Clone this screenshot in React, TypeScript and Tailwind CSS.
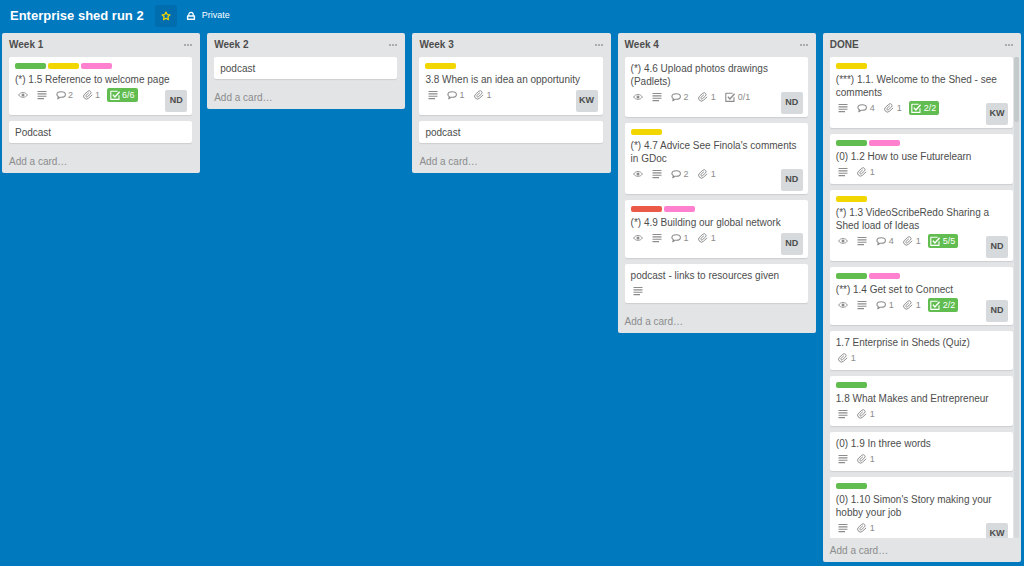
import type { ReactNode } from 'react';
import clsx from 'clsx';

type Label = 'green' | 'yellow' | 'pink' | 'red';

interface CardData {
  title: string;
  labels?: Label[];
  watching?: boolean;
  description?: boolean;
  comments?: number;
  attachments?: number;
  checklist?: string;
  member?: string;
}

interface ListData {
  name: string;
  cards: CardData[];
  scrollable?: boolean;
}

const labelColors: Record<Label, string> = {
  green: 'bg-[#61bd4f]',
  yellow: 'bg-[#f2d600]',
  pink: 'bg-[#ff80ce]',
  red: 'bg-[#eb5a46]',
};

const lists: ListData[] = [
  {
    name: 'Week 1',
    cards: [
      {
        title: '(*) 1.5 Reference to welcome page',
        labels: ['green', 'yellow', 'pink'],
        watching: true,
        description: true,
        comments: 2,
        attachments: 1,
        checklist: '6/6',
        member: 'ND',
      },
      { title: 'Podcast' },
    ],
  },
  { name: 'Week 2', cards: [{ title: 'podcast' }] },
  {
    name: 'Week 3',
    cards: [
      {
        title: '3.8 When is an idea an opportunity',
        labels: ['yellow'],
        description: true,
        comments: 1,
        attachments: 1,
        member: 'KW',
      },
      { title: 'podcast' },
    ],
  },
  {
    name: 'Week 4',
    cards: [
      {
        title: '(*) 4.6 Upload photos drawings (Padlets)',
        watching: true,
        description: true,
        comments: 2,
        attachments: 1,
        checklist: '0/1',
        member: 'ND',
      },
      {
        title: "(*) 4.7 Advice See Finola's comments in GDoc",
        labels: ['yellow'],
        watching: true,
        description: true,
        comments: 2,
        attachments: 1,
        member: 'ND',
      },
      {
        title: '(*) 4.9 Building our global network',
        labels: ['red', 'pink'],
        watching: true,
        description: true,
        comments: 1,
        attachments: 1,
        member: 'ND',
      },
      { title: 'podcast - links to resources given', description: true },
    ],
  },
  {
    name: 'DONE',
    scrollable: true,
    cards: [
      {
        title: '(***) 1.1. Welcome to the Shed - see comments',
        labels: ['yellow'],
        description: true,
        comments: 4,
        attachments: 1,
        checklist: '2/2',
        member: 'KW',
      },
      {
        title: '(0) 1.2 How to use Futurelearn',
        labels: ['green', 'pink'],
        description: true,
        attachments: 1,
      },
      {
        title: '(*) 1.3 VideoScribeRedo Sharing a Shed load of Ideas',
        labels: ['yellow'],
        watching: true,
        description: true,
        comments: 4,
        attachments: 1,
        checklist: '5/5',
        member: 'ND',
      },
      {
        title: '(**) 1.4 Get set to Connect',
        labels: ['green', 'pink'],
        watching: true,
        description: true,
        comments: 1,
        attachments: 1,
        checklist: '2/2',
        member: 'ND',
      },
      { title: '1.7 Enterprise in Sheds (Quiz)', attachments: 1 },
      {
        title: '1.8 What Makes and Entrepreneur',
        labels: ['green'],
        description: true,
        attachments: 1,
      },
      { title: '(0) 1.9 In three words', description: true, attachments: 1 },
      {
        title: "(0) 1.10 Simon's Story making your hobby your job",
        labels: ['green'],
        description: true,
        attachments: 1,
        member: 'KW',
      },
    ],
  },
];

function Icon({ children }: { children: ReactNode }) {
  return (
    <span className="flex w-[15px] shrink-0 justify-center">
      <svg viewBox="0 0 12 12" className="size-3" fill="none" stroke="currentColor" aria-hidden="true">
        {children}
      </svg>
    </span>
  );
}

function EyeIcon() {
  return (
    <Icon>
      <path d="M1.6 6C3.6 2.7 8.4 2.7 10.4 6C8.4 9.1 3.6 9.1 1.6 6Z" strokeWidth="0.9" />
      <circle cx="6" cy="6" r="1.5" fill="currentColor" stroke="none" />
    </Icon>
  );
}

function DescriptionIcon() {
  return (
    <Icon>
      <path d="M1.5 2.5H10.5M1.5 4.9H10.5M1.5 7.2H10.5M1.5 9.6H8" strokeWidth="1.1" />
    </Icon>
  );
}

function CommentIcon() {
  return (
    <Icon>
      <path
        d="M6.3 2.7C8.8 2.7 10.4 3.9 10.4 5.5S8.8 8.3 6.3 8.3C5.8 8.3 5.4 8.3 5 8.2L2.8 9.8L3.3 7.6C2.3 7.1 1.9 6.4 1.9 5.5C1.9 3.9 3.8 2.7 6.3 2.7Z"
        strokeWidth="1.1"
        strokeLinejoin="round"
      />
    </Icon>
  );
}

function AttachmentIcon() {
  return (
    <Icon>
      <path
        d="M4.9 4.2V7.6A1 1 0 0 0 6.9 7.6V3.6A1.9 1.9 0 0 0 3.1 3.6V8A2.8 2.8 0 0 0 8.7 8V3.2"
        transform="rotate(48 6 6)"
        strokeWidth="0.9"
        strokeLinecap="round"
      />
    </Icon>
  );
}

function ChecklistIcon() {
  return (
    <Icon>
      <path d="M10 6.2V10.4H1.8V2.2H8.6" strokeWidth="1.1" strokeLinejoin="round" />
      <path d="M3.9 5.8L5.9 7.9L10.6 2.8" strokeWidth="1.4" />
    </Icon>
  );
}

function Badge({ icon, text, complete }: { icon: ReactNode; text?: string | number; complete?: boolean }) {
  return (
    <span
      className={clsx(
        'flex h-3.5 items-center rounded-[2px]',
        text !== undefined && 'pr-[3px]',
        complete && 'bg-[#61bd4f] text-white'
      )}
    >
      {icon}
      {text}
    </span>
  );
}

function Card({ card }: { card: CardData }) {
  const hasBadges = card.watching || card.description || card.comments || card.attachments || card.checklist;
  const [done, total] = (card.checklist ?? '').split('/');

  return (
    <a
      href="#"
      className={clsx(
        'relative block shrink-0 rounded-[2px] bg-white px-1.5 pt-[5px] shadow-[0_1px_1px_#ccced0] hover:bg-gray-50',
        card.member ? 'pb-3' : 'pb-1'
      )}
    >
      {card.labels && (
        <div className="flex gap-0.5 pt-px pb-1">
          {card.labels.map((label) => (
            <span key={label} className={clsx('h-1.5 w-[31px] rounded-[2px]', labelColors[label])} />
          ))}
        </div>
      )}
      <p className="text-[10px] leading-[13px] text-[#4d4d4d]">{card.title}</p>
      {hasBadges && (
        <div className="flex gap-1 pt-0.5 pb-px text-[9px] leading-[14px] text-[#8c8c8c]">
          {card.watching && <Badge icon={<EyeIcon />} />}
          {card.description && <Badge icon={<DescriptionIcon />} />}
          {card.comments && <Badge icon={<CommentIcon />} text={card.comments} />}
          {card.attachments && <Badge icon={<AttachmentIcon />} text={card.attachments} />}
          {card.checklist && (
            <Badge icon={<ChecklistIcon />} text={card.checklist} complete={done === total} />
          )}
        </div>
      )}
      {card.member && (
        <span className="absolute right-[5px] bottom-[3px] flex size-[22px] items-center justify-center rounded-[2px] bg-[#d6dadc] text-[9px] font-bold text-[#4d4d4d]">
          {card.member}
        </span>
      )}
    </a>
  );
}

function List({ list }: { list: ListData }) {
  return (
    <section className="flex max-h-full min-w-0 flex-1 flex-col rounded-[2px] bg-[#e2e4e6]">
      <header className="flex h-6 shrink-0 items-center justify-between px-[7px] pb-px">
        <h2 className="text-[10px] font-bold text-[#4d4d4d]">{list.name}</h2>
        <button type="button" aria-label={`${list.name} actions`} className="text-[#999] hover:text-[#4d4d4d]">
          <svg viewBox="0 0 10 4" className="h-1 w-2.5" fill="currentColor" aria-hidden="true">
            <circle cx="2" cy="2" r="1" />
            <circle cx="5" cy="2" r="1" />
            <circle cx="8" cy="2" r="1" />
          </svg>
        </button>
      </header>
      <div className={clsx('flex min-h-0 gap-px pl-[7px]', list.scrollable ? 'pr-0.5' : 'pr-2')}>
        <div className="flex min-w-0 flex-1 flex-col gap-1.5 overflow-y-auto pb-1.5 [scrollbar-width:none]">
          {list.cards.map((card) => (
            <Card key={card.title} card={card} />
          ))}
        </div>
        {list.scrollable && (
          <div className="w-[5px] rounded-[2px] bg-[#d6dadc]">
            <div className="h-[65px] rounded-[2px] bg-[#c4c9cc]" />
          </div>
        )}
      </div>
      <button
        type="button"
        className="h-6 shrink-0 px-[7px] text-left text-[10px] text-[#8c8c8c] hover:text-[#4d4d4d]"
      >
        Add a card…
      </button>
    </section>
  );
}

export default function App() {
  return (
    <div className="flex h-screen flex-col bg-[#0079bf] font-['Liberation_Sans',Arial,sans-serif]">
      <header className="flex shrink-0 items-center px-2.5 pt-[5px] pb-1.5 text-white">
        <h1 className="text-[13px] leading-[22px] font-bold">Enterprise shed run 2</h1>
        <button
          type="button"
          aria-label="Star board"
          className="ml-[11px] flex size-[22px] items-center justify-center rounded-[2px] bg-[#006daf] text-[#f2d600]"
        >
          <svg viewBox="0 0 12 12" className="size-3" fill="none" stroke="currentColor" aria-hidden="true">
            <path
              d="M6 2L7.2 4.6L10 4.9L7.9 6.8L8.5 9.7L6 8.2L3.5 9.7L4.1 6.8L2 4.9L4.8 4.6Z"
              strokeWidth="1.2"
              strokeLinejoin="round"
            />
          </svg>
        </button>
        <button type="button" className="ml-2 flex items-center gap-[5px] text-[9px]">
          <svg viewBox="0 0 12 12" className="size-3" fill="none" stroke="currentColor" aria-hidden="true">
            <path d="M3.8 6V4.6C3.8 1.6 8.2 1.6 8.2 4.6V6" strokeWidth="1.2" />
            <path d="M2.6 6H9.4V9.2H2.6Z" strokeWidth="1.4" strokeLinejoin="round" />
          </svg>
          Private
        </button>
      </header>
      <main className="flex min-h-0 flex-1 items-start gap-[7px] pr-[3px] pb-1 pl-0.5">
        {lists.map((list) => (
          <List key={list.name} list={list} />
        ))}
      </main>
    </div>
  );
}
